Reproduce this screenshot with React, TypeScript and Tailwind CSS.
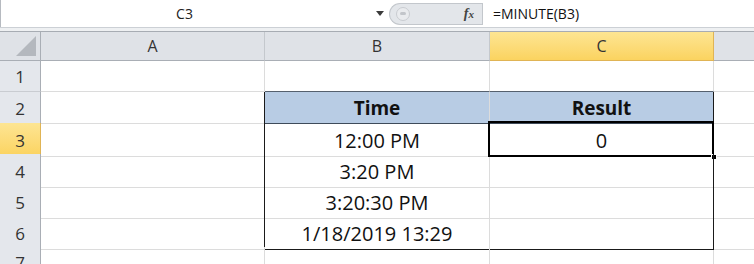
import React from 'react';

const ROWS: { n: number; b: string; c: string; head?: boolean }[] = [
  { n: 1, b: '', c: '' },
  { n: 2, b: 'Time', c: 'Result', head: true },
  { n: 3, b: '12:00 PM', c: '0' },
  { n: 4, b: '3:20 PM', c: '' },
  { n: 5, b: '3:20:30 PM', c: '' },
  { n: 6, b: '1/18/2019 13:29', c: '' },
  { n: 7, b: '', c: '' },
];

const font = { fontFamily: '"Open Sans", "Liberation Sans", sans-serif' };

function FormulaBar() {
  return (
    <div className="flex h-[28px] items-center border-b border-[#ccd0d5] bg-white">
      {/* Name box */}
      <div className="relative flex h-full w-[389px] items-center border-l border-[#b6bac0]">
        <span className="flex-1 pr-[8px] text-center text-[14px] text-[#222]">C3</span>
        <svg width="8" height="5" viewBox="0 0 8 5" className="mr-[5px]">
          <path d="M0 0 L8 0 L4 5 Z" fill="#3b3b3b" />
        </svg>
      </div>
      {/* Buttons pill */}
      <div className="flex h-[22px] w-[93px] items-center rounded-l-[11px] border border-r-0 border-[#c3c7cc] bg-[#e3e6ea]">
        <div className="ml-[6px] flex h-[14px] w-[14px] items-center justify-center rounded-full border border-[#c9ccd1] bg-[#e9ebee]">
          <div className="h-[3px] w-[6px] rounded-full bg-[#c2c5ca]" />
        </div>
        <span
          className="ml-auto mr-[8px] text-[14px] font-bold italic text-[#444]"
          style={{ fontFamily: '"Liberation Serif", serif' }}
        >
          f<span className="text-[11px]">x</span>
        </span>
      </div>
      <div className="h-[22px] w-px bg-[#c3c7cc]" />
      <span className="ml-[10px] text-[14px] text-[#111]" style={font}>
        =MINUTE(B3)
      </span>
    </div>
  );
}

function ColHeader({ label, active }: { label: string; active?: boolean }) {
  return (
    <div
      className={
        active
          ? 'flex items-center justify-center border-b border-r border-[#e0b455] bg-gradient-to-b from-[#fde592] to-[#fbd35f] text-[16px] text-[#333]'
          : 'flex items-center justify-center border-b border-r border-[#a9aeb5] border-r-[#c4c8cd] bg-[#dfe2e7] text-[16px] text-[#333]'
      }
    >
      {label}
    </div>
  );
}

export default function App() {
  return (
    <div className="h-[264px] w-[754px] overflow-hidden bg-white" style={font}>
      <FormulaBar />
      <div className="h-[4px] border-b border-[#a7acb3] bg-[#eef0f2]" />
      {/* Column headers */}
      <div className="grid h-[29px] grid-cols-[41px_224px_225px_224px_1fr]">
        <div className="flex items-end justify-end border-b border-r border-[#a9aeb5] bg-[#dfe2e7] pb-[4px] pr-[4px]">
          <svg width="20" height="20" viewBox="0 0 20 20">
            <path d="M20 0 L20 20 L0 20 Z" fill="#b4b8be" />
          </svg>
        </div>
        <ColHeader label="A" />
        <ColHeader label="B" />
        <ColHeader label="C" active />
        <div className="border-b border-[#a9aeb5] bg-[#dfe2e7]" />
      </div>
      {/* Rows */}
      {ROWS.map((r) => {
        const inTable = r.n >= 2 && r.n <= 6;
        const aboveTable = r.n === 1;
        const lastRow = r.n === 6;
        return (
          <div key={r.n} className="grid h-[31px] grid-cols-[41px_224px_225px_224px_1fr]">
            <div
              className={
                r.n === 3
                  ? 'flex items-center justify-center border-b border-r border-[#e0b455] bg-gradient-to-b from-[#fde592] to-[#fbd35f] pt-[2px] text-[17px] text-[#333]'
                  : 'flex items-center justify-center border-b border-r border-[#c9ccd1] border-r-[#a9aeb5] bg-[#e4e7ec] pt-[2px] text-[17px] text-[#333]'
              }
            >
              {r.n}
            </div>
            {/* A */}
            <div
              className={
                inTable
                  ? 'border-b border-r border-[#dcdcdc] border-r-[#1a1a1a]'
                  : 'border-b border-r border-[#dcdcdc]'
              }
            />
            {/* B */}
            <div
              className={
                r.head
                  ? 'flex items-center justify-center border-b border-r border-[#dcdcdc] border-b-[#3e4a59] bg-[#b8cce4] pt-[2px] text-[19px] font-bold text-[#111]'
                  : aboveTable
                    ? 'border-b border-r border-[#dcdcdc] border-b-[#55606e]'
                    : inTable
                      ? `flex items-center justify-center border-b border-r border-[#dcdcdc] pt-[3px] text-[20px] text-[#111] ${lastRow ? 'border-b-[#1a1a1a]' : ''}`
                      : 'border-b border-r border-[#dcdcdc]'
              }
            >
              {r.b}
            </div>
            {/* C */}
            <div
              className={
                r.head
                  ? 'flex items-center justify-center border-b border-r border-[#1a1a1a] border-b-[#3e4a59] bg-[#b8cce4] pt-[2px] text-[19px] font-bold text-[#111]'
                  : aboveTable
                    ? 'border-b border-r border-[#dcdcdc] border-b-[#55606e]'
                    : inTable
                      ? `relative flex items-center justify-center border-b border-r border-[#dcdcdc] border-r-[#1a1a1a] pt-[3px] text-[20px] text-[#111] ${lastRow ? 'border-b-[#1a1a1a]' : ''}`
                      : 'border-b border-r border-[#dcdcdc]'
              }
            >
              {r.c}
              {r.n === 3 && (
                <>
                  <div className="pointer-events-none absolute -bottom-px -left-[2px] -right-px -top-[2px] border-2 border-black" />
                  <div className="absolute -bottom-[4px] -right-[4px] h-[6px] w-[6px] border border-white bg-black" />
                </>
              )}
            </div>
            <div className="border-b border-[#dcdcdc]" />
          </div>
        );
      })}
    </div>
  );
}
